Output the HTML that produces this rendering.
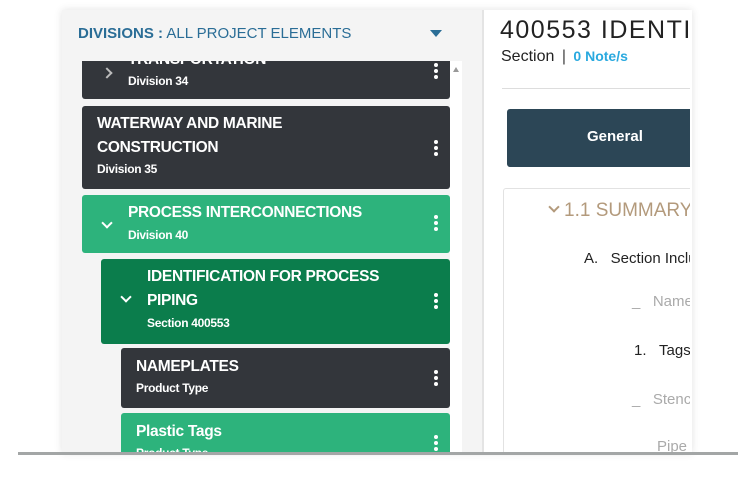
<!DOCTYPE html>
<html><head><meta charset="utf-8"><style>
*{margin:0;padding:0;box-sizing:border-box}
body{width:755px;height:479px;background:#fff;position:relative;overflow:hidden;font-family:"Liberation Sans",Arial,sans-serif}
.card{position:absolute;left:62px;top:10px;width:630px;height:443px;background:#f4f4f4;box-shadow:0 0 8px rgba(0,0,0,.12);overflow:hidden}
.hdr{position:absolute;left:16px;top:15px;font-size:15px;color:#2a6d96}
.hdr b{font-weight:bold}
.tri{position:absolute;left:368px;top:20px;width:0;height:0;border-left:6px solid transparent;border-right:6px solid transparent;border-top:7px solid #2a6d96}
.list{position:absolute;left:20px;top:51px;width:380px;height:392px;overflow:hidden}
.sb{position:absolute;left:388px;top:51px;width:12px;height:392px;background:#fff}
.sb:after{content:"";position:absolute;left:3px;top:6px;border-left:3px solid transparent;border-right:3px solid transparent;border-bottom:5px solid #999}
.it{position:absolute;right:12px;border-radius:3px;color:#fff}
.dk{background:#33363b}.gr{background:#2db37c}.dg{background:#0b7d4c}
.t{position:absolute;font-size:15.5px;line-height:24px;font-weight:bold;font-family:"Liberation Sans",Arial,sans-serif;letter-spacing:-.3px}
.s{position:absolute;font-size:12px;font-weight:bold;letter-spacing:-.3px}
.dots{position:absolute;right:12px;width:4px}
.dots i{display:block;width:4px;height:4px;border-radius:2px;background:#fff;margin-bottom:2px}
.chev{position:absolute;width:8px;height:8px;border-right:2px solid #fff;border-bottom:2px solid #fff}
.right{position:absolute;left:420px;top:0;width:210px;height:443px;background:#fff;border-left:2px solid #e4e4e4}
.clip{position:absolute;left:0;top:0;width:206px;height:443px;overflow:hidden}
.line{position:absolute;left:18px;top:452px;width:720px;height:3px;background:#a3a6a6}
</style></head><body>
<div class="card">
<div class="hdr"><b>DIVISIONS :</b> ALL PROJECT ELEMENTS</div>
<div class="tri"></div>
<div class="list">
 <div class="it dk" style="left:0;top:-20px;height:58px;right:12px">
  <div class="chev" style="left:21px;top:28px;transform:rotate(-45deg);border-color:#bbb"></div>
  <div class="t" style="left:46px;top:7px">TRANSPORTATION</div>
  <div class="s" style="left:46px;top:33px">Division 34</div>
  <div class="dots" style="top:22px"><i></i><i></i><i></i></div>
 </div>
 <div class="it dk" style="left:0;top:45px;height:83px">
  <div class="t" style="left:15px;top:6px">WATERWAY AND MARINE<br>CONSTRUCTION</div>
  <div class="s" style="left:15px;top:56px">Division 35</div>
  <div class="dots" style="top:34px"><i></i><i></i><i></i></div>
 </div>
 <div class="it gr" style="left:0;top:134px;height:58px">
  <div class="chev" style="left:21px;top:24px;transform:rotate(45deg)"></div>
  <div class="t" style="left:46px;top:6px">PROCESS INTERCONNECTIONS</div>
  <div class="s" style="left:46px;top:33px">Division 40</div>
  <div class="dots" style="top:20px"><i></i><i></i><i></i></div>
 </div>
 <div class="it dg" style="left:19px;top:198px;height:85px">
  <div class="chev" style="left:21px;top:34px;transform:rotate(45deg)"></div>
  <div class="t" style="left:46px;top:6px">IDENTIFICATION FOR PROCESS<br>PIPING</div>
  <div class="s" style="left:46px;top:57px">Section 400553</div>
  <div class="dots" style="top:34px"><i></i><i></i><i></i></div>
 </div>
 <div class="it dk" style="left:39px;top:287px;height:60px">
  <div class="t" style="left:15px;top:7px">NAMEPLATES</div>
  <div class="s" style="left:15px;top:33px">Product Type</div>
  <div class="dots" style="top:22px"><i></i><i></i><i></i></div>
 </div>
 <div class="it gr" style="left:39px;top:352px;height:60px">
  <div class="t" style="left:15px;top:7px">Plastic Tags</div>
  <div class="s" style="left:15px;top:33px">Product Type</div>
  <div class="dots" style="top:22px"><i></i><i></i><i></i></div>
 </div>
</div>
<div class="sb"></div>
<div class="right"><div class="clip">
 <div style="position:absolute;left:16px;top:6px;font-size:25px;letter-spacing:1.5px;color:#222;white-space:nowrap">400553 IDENTIFICATION</div>
 <div style="position:absolute;left:17px;top:38px;font-size:16px;color:#222;white-space:nowrap">Section <span style="color:#444;margin:0 3px">|</span> <b style="color:#29a9df;font-size:14px">0 Note/s</b></div>
 <div style="position:absolute;left:18px;top:78px;width:200px;height:1px;background:#ddd"></div>
 <div style="position:absolute;left:23px;top:99px;width:200px;height:58px;background:#2c4656;border-radius:3px 0 0 3px;color:#fff;font-weight:bold;font-size:15px"><span style="position:absolute;left:80px;top:19px">General</span></div>
 <div style="position:absolute;left:19px;top:178px;width:200px;height:280px;border:1px solid #e2e2e2;border-radius:3px"></div>
 <div style="position:absolute;left:66px;top:190px;font-size:19px;color:#b39a7c;white-space:nowrap"><span style="display:inline-block;width:8px;height:8px;border-right:2px solid #b39a7c;border-bottom:2px solid #b39a7c;transform:rotate(45deg);margin:0 6px 5px 0"></span>1.1 SUMMARY</div>
 <div style="position:absolute;left:100px;top:240px;font-size:15px;color:#222;white-space:nowrap">A.&nbsp;&nbsp;&nbsp;Section Includes</div>
 <div style="position:absolute;left:148px;top:283px;font-size:15px;color:#aaa;white-space:nowrap">_&nbsp;&nbsp;&nbsp;Name</div>
 <div style="position:absolute;left:150px;top:332px;font-size:15px;color:#222;white-space:nowrap">1.&nbsp;&nbsp;&nbsp;Tags</div>
 <div style="position:absolute;left:148px;top:381px;font-size:15px;color:#aaa;white-space:nowrap">_&nbsp;&nbsp;&nbsp;Stencils</div>
 <div style="position:absolute;left:173px;top:428px;font-size:15px;color:#aaa;white-space:nowrap">Pipe</div>
</div></div>
</div>
<div class="line"></div>
</body></html>
